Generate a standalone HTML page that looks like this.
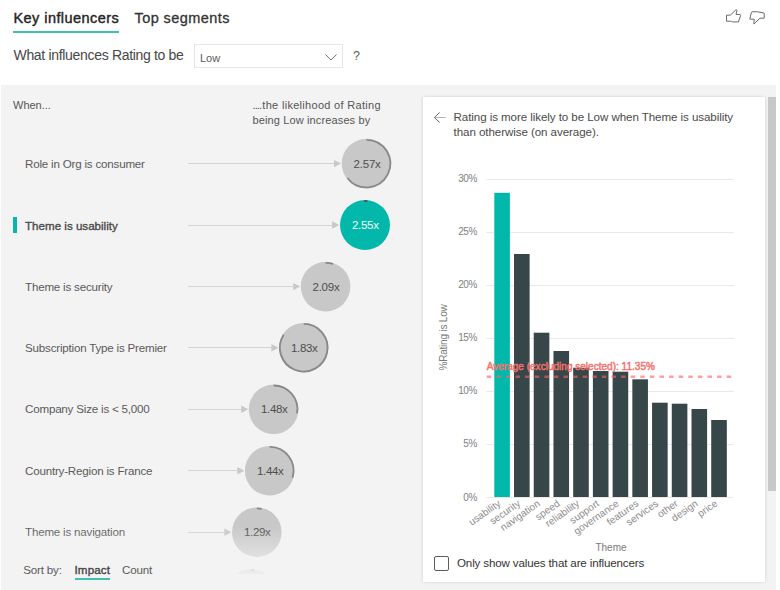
<!DOCTYPE html>
<html><head><meta charset="utf-8">
<style>
html,body{margin:0;padding:0;}
body{width:780px;height:590px;position:relative;overflow:hidden;background:#fff;font-family:"Liberation Sans",sans-serif;color:#252423;}
.a{position:absolute;white-space:nowrap;line-height:1;}
.tab{font-size:14.5px;font-weight:400;color:#252423;-webkit-text-stroke:0.4px #252423;}
.panel{position:absolute;left:1px;top:85px;width:775px;height:505px;background:#f3f3f3;}
.lbl{font-size:11.6px;color:#5a5a5a;letter-spacing:-0.2px;}
.hdr{font-size:11px;color:#555;}
.card{position:absolute;left:423px;top:97px;width:341.6px;height:485px;background:#fff;box-shadow:0 0 3px rgba(0,0,0,0.16);}
.ax{font-size:10px;color:#777;}
.yl{font-size:10px;fill:#808080;letter-spacing:-0.4px;font-family:"Liberation Sans",sans-serif;}
.xl{font-size:10px;fill:#8c8c8c;font-family:"Liberation Sans",sans-serif;}
.xt{font-size:10px;fill:#7a7a7a;font-family:"Liberation Sans",sans-serif;}
.avg{font-size:10px;fill:#f4716c;stroke:#f4716c;stroke-width:0.45px;font-family:"Liberation Sans",sans-serif;letter-spacing:0.02px;}
</style></head><body>
<!-- tabs -->
<div class="a tab" style="left:13.5px;top:10.5px;letter-spacing:0.43px;">Key influencers</div>
<div style="position:absolute;left:13px;top:31px;width:106px;height:2px;background:#3fbfb2;"></div>
<div class="a tab" style="left:134.5px;top:10.5px;letter-spacing:0.42px;color:#333;-webkit-text-stroke:0.3px #333;">Top segments</div>

<!-- thumbs -->
<svg style="position:absolute;left:715px;top:0" width="65" height="35" viewBox="0 0 65 35">
 <path d="M11.5 21.2 L11.5 15.2 L15.4 15.1 L20.8 9.9 Q21.6 9.3 21.9 10.6 L21.0 14.5 L25.1 14.5 Q25.7 14.7 25.6 15.6 L23.4 21.9 L17.8 22 Q16.5 21.3 15.6 21.3 Z" fill="none" stroke="#6a6a6a" stroke-width="1" stroke-linejoin="round"/>
 <path d="M37.1 11.7 L42.7 11.8 L49 13 Q49.3 13.1 49.3 13.5 L49.2 18.2 L44.9 18.2 L38.9 24 Q38.6 24.2 38.8 23.6 L39.3 19.3 L34.8 19.1 L36.4 12.4 Q36.6 11.7 37.1 11.7 Z" fill="none" stroke="#6a6a6a" stroke-width="1" stroke-linejoin="round"/>
</svg>

<div class="a" style="left:13.5px;top:48px;font-size:14px;color:#474747;letter-spacing:-0.32px;">What influences Rating to be</div>
<div style="position:absolute;left:194px;top:44px;width:147px;height:22px;border:1px solid #e6e6e6;background:#fff;"></div>
<div class="a" style="left:200px;top:52.5px;font-size:11px;color:#5a5a5a;">Low</div>
<svg style="position:absolute;left:324px;top:52px" width="14" height="10" viewBox="0 0 14 10"><path d="M1.5 2.5 L7 8 L12.5 2.5" fill="none" stroke="#777" stroke-width="1"/></svg>
<div class="a" style="left:353px;top:50px;font-size:12.5px;color:#5a5a5a;">?</div>

<div class="panel"></div>
<div class="a hdr" style="left:13px;top:100px;">When...</div>
<div class="a hdr" style="left:252.5px;top:99.8px;letter-spacing:0.3px;"><span style="letter-spacing:-0.9px">....</span>&#8202;the likelihood of Rating</div>
<div class="a hdr" style="left:252.5px;top:114.8px;letter-spacing:0.13px;">being Low increases by</div>

<svg style="position:absolute;left:0;top:0" width="420" height="590" viewBox="0 0 420 590">
 <g stroke="#d4d4d4" stroke-width="1.2" fill="#c8c8c8">
  <line x1="188" y1="163.5" x2="335.0" y2="163.5"/><path d="M334.0 159.9 L341.0 163.6 L334.0 167.3 Z" stroke="none"/>
  <line x1="188" y1="225.5" x2="333.2" y2="225.5"/><path d="M332.2 221.3 L339.2 225.0 L332.2 228.7 Z" stroke="none"/>
  <line x1="188" y1="286.5" x2="294.2" y2="286.5"/><path d="M293.2 282.9 L300.2 286.6 L293.2 290.3 Z" stroke="none"/>
  <line x1="188" y1="347.5" x2="272.4" y2="347.5"/><path d="M271.4 344.0 L278.4 347.7 L271.4 351.4 Z" stroke="none"/>
  <line x1="188" y1="409.5" x2="242.2" y2="409.5"/><path d="M241.2 405.6 L248.2 409.3 L241.2 413.0 Z" stroke="none"/>
  <line x1="188" y1="470.5" x2="238.4" y2="470.5"/><path d="M237.4 467.0 L244.4 470.7 L237.4 474.4 Z" stroke="none"/>
  <line x1="188" y1="532.5" x2="225.4" y2="532.5"/><path d="M224.4 528.5 L231.4 532.2 L224.4 535.9 Z" stroke="none"/>
 </g>
 <!-- circles -->
 <circle cx="366.5" cy="163.6" r="24.8" fill="#c8c8c8"/>
 <circle cx="365" cy="225" r="25" fill="#01b8aa"/>
 <circle cx="325.6" cy="286.6" r="24.8" fill="#c8c8c8"/>
 <circle cx="303.7" cy="347.7" r="24.8" fill="#c8c8c8"/>
 <circle cx="273.6" cy="409.3" r="24.8" fill="#c8c8c8"/>
 <circle cx="269.7" cy="470.7" r="24.8" fill="#c8c8c8"/>
 <circle cx="256.8" cy="532.2" r="24.8" fill="#c8c8c8"/>
 <circle cx="251" cy="594" r="24.8" fill="#c8c8c8"/>
 <path d="M366.50 139.80 A23.8 23.8 0 1 1 347.49 177.92" fill="none" stroke="#898989" stroke-width="1.8"/>
 <path d="M364.20 201.01 A24 24 0 0 1 367.50 201.13" fill="none" stroke="#555" stroke-width="2"/>
 <path d="M325.60 262.80 A23.8 23.8 0 0 1 332.95 263.96" fill="none" stroke="#898989" stroke-width="1.8"/>
 <path d="M303.70 323.90 A23.8 23.8 0 1 1 283.74 334.74" fill="none" stroke="#898989" stroke-width="1.8"/>
 <path d="M273.60 385.50 A23.8 23.8 0 0 1 297.04 413.43" fill="none" stroke="#898989" stroke-width="1.8"/>
 <path d="M269.70 446.90 A23.8 23.8 0 0 1 292.46 477.66" fill="none" stroke="#898989" stroke-width="1.8"/>
 <path d="M256.80 508.40 A23.8 23.8 0 0 1 261.75 508.92" fill="none" stroke="#898989" stroke-width="1.8"/>
 <path d="M251.00 570.20 A23.8 23.8 0 0 1 254.31 570.43" fill="none" stroke="#898989" stroke-width="1.8"/>
</svg>

<div class="a lbl" style="left:25px;top:158px;">Role in Org is consumer</div>
<div style="position:absolute;left:13px;top:217px;width:4px;height:16px;background:#01b8aa;"></div>
<div class="a lbl" style="left:25px;top:219.6px;letter-spacing:0px;color:#4a4a4a;-webkit-text-stroke:0.35px #4a4a4a;">Theme is usability</div>
<div class="a lbl" style="left:25px;top:281px;">Theme is security</div>
<div class="a lbl" style="left:25px;top:342px;">Subscription Type is Premier</div>
<div class="a lbl" style="left:25px;top:403px;">Company Size is &lt; 5,000</div>
<div class="a lbl" style="left:25px;top:465px;">Country-Region is France</div>
<div class="a lbl" style="left:25px;top:526px;">Theme is navigation</div>

<div class="a" style="left:353.5px;top:159px;font-size:11.5px;color:#4e4e4e;letter-spacing:-0.2px;">2.57x</div>
<div class="a" style="left:352px;top:220px;font-size:11.5px;color:#f4fbfa;letter-spacing:-0.3px;">2.55x</div>
<div class="a" style="left:312.5px;top:282px;font-size:11.5px;color:#4e4e4e;letter-spacing:-0.25px;">2.09x</div>
<div class="a" style="left:291px;top:343px;font-size:11.5px;color:#4e4e4e;letter-spacing:-0.35px;">1.83x</div>
<div class="a" style="left:261px;top:404px;font-size:11.5px;color:#4e4e4e;letter-spacing:-0.35px;">1.48x</div>
<div class="a" style="left:257px;top:466px;font-size:11.5px;color:#4e4e4e;letter-spacing:-0.35px;">1.44x</div>
<div class="a" style="left:244px;top:527px;font-size:11.5px;color:#4e4e4e;letter-spacing:-0.35px;">1.29x</div>

<div style="position:absolute;left:1px;top:526px;width:420px;height:48px;background:linear-gradient(to bottom,rgba(243,243,243,0) 0%,rgba(243,243,243,0.88) 100%);"></div>
<div style="position:absolute;left:1px;top:574px;width:420px;height:16px;background:#f3f3f3;"></div>
<div class="a lbl" style="left:23.3px;top:563.5px;">Sort by:</div>
<div class="a lbl" style="left:74.5px;top:563.5px;letter-spacing:0.15px;color:#444;-webkit-text-stroke:0.35px #444;">Impact</div>
<div style="position:absolute;left:74.5px;top:577.5px;width:35.5px;height:2px;background:#3fbfb2;"></div>
<div class="a lbl" style="left:122px;top:563.5px;">Count</div>

<!-- card -->
<div class="card"></div>
<div style="position:absolute;left:768.4px;top:97px;width:7.6px;height:394px;background:#c8c8c8;"></div>
<svg style="position:absolute;left:430px;top:108px" width="20" height="20" viewBox="0 0 20 20"><path d="M5 9.5 L15.8 9.5" fill="none" stroke="#b5b5b5" stroke-width="1"/><path d="M9.7 4.4 L4.4 9.5 L9.7 14.6" fill="none" stroke="#6a6a6a" stroke-width="1"/></svg>
<div class="a" style="left:453.5px;top:109px;font-size:11.6px;color:#4a4a4a;line-height:15px;letter-spacing:-0.08px;">Rating is more likely to be Low when Theme is usability<br>than otherwise (on average).</div>

<svg style="position:absolute;left:0;top:0" width="780" height="590" viewBox="0 0 780 590">
 <line x1="486.5" y1="497.5" x2="734" y2="497.5" stroke="#e9e9e9" stroke-width="1"/>
 <text x="477" y="500.5" text-anchor="end" class="yl">0%</text>
 <line x1="486.5" y1="444.5" x2="734" y2="444.5" stroke="#e9e9e9" stroke-width="1"/>
 <text x="477" y="447.4" text-anchor="end" class="yl">5%</text>
 <line x1="486.5" y1="391.5" x2="734" y2="391.5" stroke="#e9e9e9" stroke-width="1"/>
 <text x="477" y="394.3" text-anchor="end" class="yl">10%</text>
 <line x1="486.5" y1="338.5" x2="734" y2="338.5" stroke="#e9e9e9" stroke-width="1"/>
 <text x="477" y="341.2" text-anchor="end" class="yl">15%</text>
 <line x1="486.5" y1="285.5" x2="734" y2="285.5" stroke="#e9e9e9" stroke-width="1"/>
 <text x="477" y="288.2" text-anchor="end" class="yl">20%</text>
 <line x1="486.5" y1="232.5" x2="734" y2="232.5" stroke="#e9e9e9" stroke-width="1"/>
 <text x="477" y="235.1" text-anchor="end" class="yl">25%</text>
 <line x1="486.5" y1="179.5" x2="734" y2="179.5" stroke="#e9e9e9" stroke-width="1"/>
 <text x="477" y="182.0" text-anchor="end" class="yl">30%</text>
 <rect x="494.30" y="192.8" width="15.6" height="304.2" fill="#01b8aa"/>
 <rect x="514.02" y="254" width="15.6" height="243.0" fill="#374649"/>
 <rect x="533.74" y="332.7" width="15.6" height="164.3" fill="#374649"/>
 <rect x="553.46" y="351" width="15.6" height="146.0" fill="#374649"/>
 <rect x="573.18" y="367.7" width="15.6" height="129.3" fill="#374649"/>
 <rect x="592.90" y="371" width="15.6" height="126.0" fill="#374649"/>
 <rect x="612.62" y="371.7" width="15.6" height="125.3" fill="#374649"/>
 <rect x="632.34" y="379.3" width="15.6" height="117.7" fill="#374649"/>
 <rect x="652.06" y="402.7" width="15.6" height="94.3" fill="#374649"/>
 <rect x="671.78" y="403.7" width="15.6" height="93.3" fill="#374649"/>
 <rect x="691.50" y="409" width="15.6" height="88.0" fill="#374649"/>
 <rect x="711.22" y="420" width="15.6" height="77.0" fill="#374649"/>
 <text transform="translate(501.3,505) rotate(-35)" text-anchor="end" class="xl">usability</text>
 <text transform="translate(521.0,505) rotate(-35)" text-anchor="end" class="xl">security</text>
 <text transform="translate(540.7,505) rotate(-35)" text-anchor="end" class="xl">navigation</text>
 <text transform="translate(560.5,505) rotate(-35)" text-anchor="end" class="xl">speed</text>
 <text transform="translate(580.2,505) rotate(-35)" text-anchor="end" class="xl">reliability</text>
 <text transform="translate(599.9,505) rotate(-35)" text-anchor="end" class="xl">support</text>
 <text transform="translate(619.6,505) rotate(-35)" text-anchor="end" class="xl">governance</text>
 <text transform="translate(639.3,505) rotate(-35)" text-anchor="end" class="xl">features</text>
 <text transform="translate(659.1,505) rotate(-35)" text-anchor="end" class="xl">services</text>
 <text transform="translate(678.8,505) rotate(-35)" text-anchor="end" class="xl">other</text>
 <text transform="translate(698.5,505) rotate(-35)" text-anchor="end" class="xl">design</text>
 <text transform="translate(718.2,505) rotate(-35)" text-anchor="end" class="xl">price</text>
 <text x="486.7" y="370.2" class="avg">Average (excluding selected): 11.35%</text>
 <line x1="486.7" y1="376.7" x2="734" y2="376.7" stroke="#fd625e" stroke-opacity="0.6" stroke-width="2.5" stroke-dasharray="4.5 5.1"/>
 <text x="611" y="551" text-anchor="middle" class="xt">Theme</text>
 <text transform="translate(447,337.5) rotate(-90)" text-anchor="middle" class="xt" style="letter-spacing:-0.2px">%Rating is Low</text>
</svg>
<div class="a" style="left:434.3px;top:556.3px;width:12.3px;height:12.3px;border:1.6px solid #5c5c5c;border-radius:2px;"></div>
<div class="a" style="left:457px;top:557px;font-size:11.6px;color:#333;letter-spacing:-0.15px;">Only show values that are influencers</div>

</body></html>
